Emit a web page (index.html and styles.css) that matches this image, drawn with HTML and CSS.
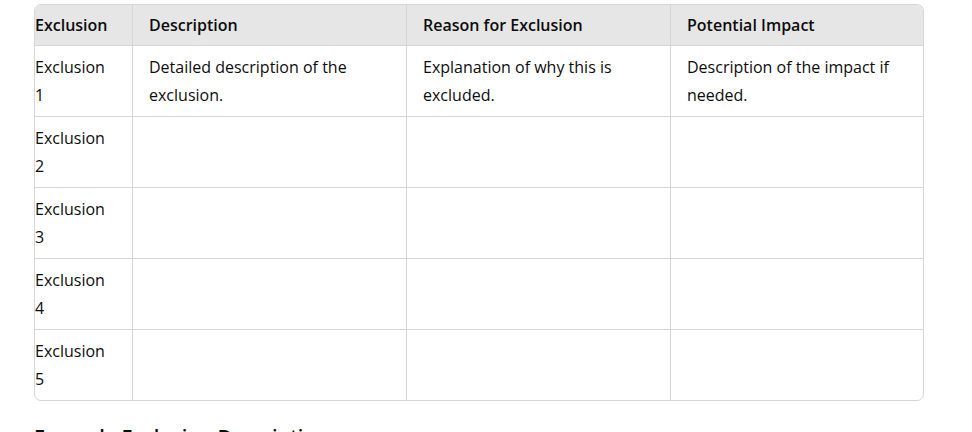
FILE: index.html
```html
<!DOCTYPE html>
<html lang="en">
<head>
<meta charset="utf-8">
<title>Exclusions</title>
<link rel="stylesheet" href="styles.css">
</head>
<body>
<main class="page">
  <div class="table-wrap">
    <table class="excl">
      <colgroup>
        <col class="c1"><col class="c2"><col class="c3"><col class="c4">
      </colgroup>
      <thead>
        <tr><th>Exclusion</th><th>Description</th><th>Reason for Exclusion</th><th>Potential Impact</th></tr>
      </thead>
      <tbody>
        <tr><td>Exclusion 1</td><td>Detailed description of the exclusion.</td><td>Explanation of why this is excluded.</td><td>Description of the impact if needed.</td></tr>
        <tr><td>Exclusion 2</td><td></td><td></td><td></td></tr>
        <tr><td>Exclusion 3</td><td></td><td></td><td></td></tr>
        <tr><td>Exclusion 4</td><td></td><td></td><td></td></tr>
        <tr><td>Exclusion 5</td><td></td><td></td><td></td></tr>
      </tbody>
    </table>
  </div>
  <h3 class="sub">Example Exclusion Description</h3>
</main>
</body>
</html>
```
FILE: styles.css
```css
html, body {
  margin: 0;
  padding: 0;
  background: #ffffff;
}
body {
  font-family: "Open Sans", "Noto Sans", sans-serif;
  color: #0d0d0d;
  font-size: 16px;
}
.page {
  padding: 4px 0 0 34px;
  width: 890px;
}
.table-wrap {
  border: 1px solid #d6d6d6;
  border-radius: 7px;
  overflow: hidden;
}
.excl {
  width: 100%;
  table-layout: fixed;
  border-collapse: separate;
  border-spacing: 0;
  line-height: 28px;
}
.c1 { width: 98px; }
.c2 { width: 274px; }
.c3 { width: 264px; }
.excl th {
  background: #e6e6e6;
  font-weight: 600;
  text-align: left;
  padding: 6px 16px;
  border-right: 1px solid #d6d6d6;
  border-bottom: 1px solid #d6d6d6;
}
.excl td {
  padding: 7px 16px;
  vertical-align: top;
  border-right: 1px solid #d6d6d6;
  border-bottom: 1px solid #d6d6d6;
  height: 56px;
  box-sizing: content-box;
}
.excl th:first-child,
.excl td:first-child {
  padding-left: 0;
}
.excl th:last-child,
.excl td:last-child {
  border-right: none;
}
.excl tbody tr:last-child td {
  border-bottom: none;
}
.sub {
  margin: 22px 0 0;
  font-size: 20px;
  font-weight: 600;
  line-height: 28px;
}
```
